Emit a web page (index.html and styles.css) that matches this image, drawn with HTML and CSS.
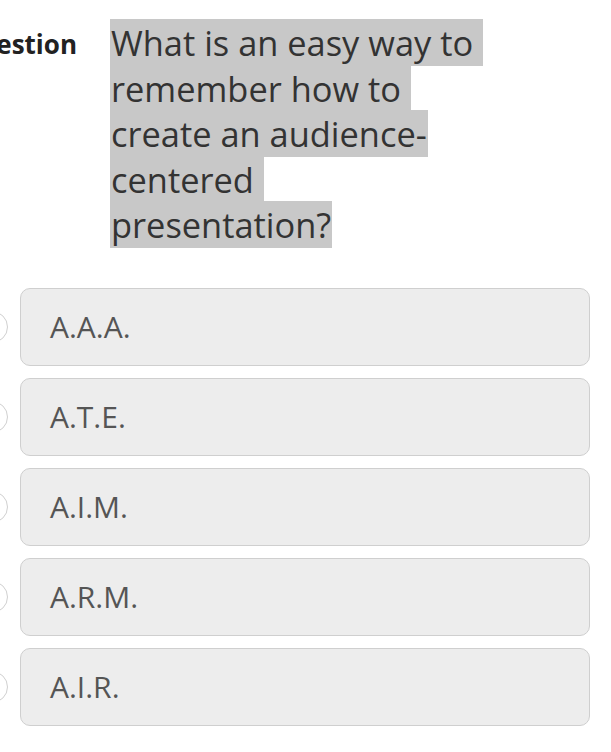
FILE: index.html
```html
<!DOCTYPE html>
<html>
<head>
<meta charset="utf-8">
<link rel="stylesheet" href="styles.css">
</head>
<body>
<div class="page">
  <div class="qrow">
    <div class="label">Question</div>
    <div class="qtext"><span class="hl">What is an easy way to remember how to create an audience-centered presentation?</span></div>
  </div>
  <div class="options">
    <div class="opt"><span class="radio"></span><div class="box">A.A.A.</div></div>
    <div class="opt"><span class="radio"></span><div class="box">A.T.E.</div></div>
    <div class="opt"><span class="radio"></span><div class="box">A.I.M.</div></div>
    <div class="opt"><span class="radio"></span><div class="box">A.R.M.</div></div>
    <div class="opt"><span class="radio"></span><div class="box">A.I.R.</div></div>
  </div>
</div>
</body>
</html>
```
FILE: styles.css
```css
html, body {
  margin: 0;
  padding: 0;
  background: #fff;
  overflow: hidden;
}
body {
  font-family: "Open Sans", "Liberation Sans", sans-serif;
  width: 611px;
  height: 752px;
}
.page {
  padding-top: 20px;
}
.qrow {
  display: flex;
  align-items: flex-start;
}
.label {
  flex: 0 0 auto;
  width: 120px;
  margin-left: -43px;
  text-align: right;
  font-weight: 700;
  font-size: 26px;
  line-height: 48px;
  color: #222;
  margin-right: 33px;
}
.qtext {
  width: 366px;
  font-size: 34.4px;
  line-height: 45.5px;
  color: #333;
  white-space: pre-wrap;
}
.hl {
  background: #c8c8c8;
  padding: 0 1px;
  -webkit-box-decoration-break: clone;
  box-decoration-break: clone;
}
.options {
  margin-top: 40px;
  display: flex;
  flex-direction: column;
  gap: 12px;
}
.opt {
  display: flex;
  align-items: center;
  margin-left: -24px;
}
.radio {
  flex: 0 0 auto;
  width: 30px;
  height: 30px;
  border: 1px solid #d0d0d0;
  border-radius: 50%;
  background: #fff;
  margin-right: 12px;
}
.box {
  width: 539px;
  height: 76px;
  background: #ededed;
  border: 1px solid #cfcfcf;
  border-radius: 10px;
  display: flex;
  align-items: center;
  padding-left: 29px;
  box-sizing: content-box;
  font-size: 30px;
  color: #555;
}
```
